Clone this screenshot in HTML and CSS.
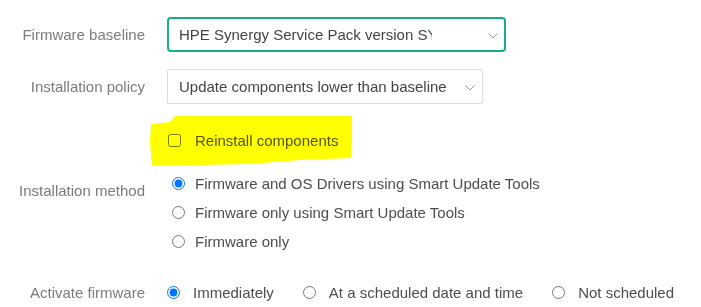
FILE: index.html
```html
<!DOCTYPE html>
<html lang="en">
<head>
    <meta charset="UTF-8">
    <meta name="viewport" content="width=device-width, initial-scale=1.0">
    <title>Firmware settings</title>
    <link rel="stylesheet" href="styles.css">
</head>
<body>
    <form class="settings">
        <div class="field">
            <span class="label">Firmware baseline</span>
            <div class="select select-active">
                <span class="select-text clipped">HPE Synergy Service Pack version SY</span>
                <svg class="chevron" width="10" height="6" viewBox="0 0 10 6"><path d="M0.5 0.5 L5 5 L9.5 0.5" fill="none" stroke="#9a9a9a" stroke-width="1"/></svg>
            </div>
        </div>

        <div class="field field-policy">
            <span class="label">Installation policy</span>
            <div class="select select-policy">
                <span class="select-text">Update components lower than baseline</span>
                <svg class="chevron" width="10" height="6" viewBox="0 0 10 6"><path d="M0.5 0.5 L5 5 L9.5 0.5" fill="none" stroke="#9a9a9a" stroke-width="1"/></svg>
            </div>
        </div>

        <div class="field field-check">
            <span></span>
            <label class="check">
                <input type="checkbox">
                <span>Reinstall components</span>
            </label>
            <!-- highlighter mark over the checkbox -->
            <svg class="highlight" width="210" height="56" viewBox="0 0 210 56">
                <polygon points="3,10 22,8 27,2 204,2 204,26 203,44 152,46 102,50 52,51 4,52 2,28" fill="#ffff00"/>
            </svg>
        </div>

        <div class="field field-method">
            <span class="label">Installation method</span>
            <div class="options">
                <label class="option"><input type="radio" name="method" checked><span>Firmware and OS Drivers using Smart Update Tools</span></label>
                <label class="option"><input type="radio" name="method"><span>Firmware only using Smart Update Tools</span></label>
                <label class="option"><input type="radio" name="method"><span>Firmware only</span></label>
            </div>
        </div>

        <div class="field field-activate">
            <span class="label">Activate firmware</span>
            <div class="inline-options">
                <label class="inline-option"><input type="radio" name="activate" checked><span>Immediately</span></label>
                <label class="inline-option"><input type="radio" name="activate"><span>At a scheduled date and time</span></label>
                <label class="inline-option"><input type="radio" name="activate"><span>Not scheduled</span></label>
            </div>
        </div>
    </form>
</body>
</html>
```

FILE: styles.css
```css
body {
    margin: 0;
    padding: 0;
    background: #fff;
    font-family: 'Liberation Sans', Arial, sans-serif;
    font-size: 15px;
    overflow: hidden;
    height: 307px;
}

.settings {
    display: flex;
    flex-direction: column;
    padding-top: 17px;
}

.field {
    display: grid;
    grid-template-columns: 145px 1fr;
    column-gap: 22px;
    align-items: center;
    position: relative;
}

.label {
    text-align: right;
    color: #7b7b7b;
    white-space: nowrap;
}

/* selects */
.select {
    display: flex;
    align-items: center;
    height: 35px;
    box-sizing: border-box;
    color: #444;
    background: #fff;
}

.select-active {
    width: 339px;
    border: 2px solid #17ad86;
    border-radius: 4px;
    padding: 0 6px 0 10px;
}

.select-policy {
    width: 316px;
    border: 1px solid #dcdcdc;
    border-radius: 2px;
    padding: 0 7px 0 11px;
}

.select-text {
    white-space: nowrap;
}

.clipped {
    width: 253px;
    overflow: hidden;
}

.chevron {
    margin-left: auto;
    margin-top: 3px;
}

.field-policy {
    margin-top: 17px;
}

/* checkbox */
.field-check {
    margin-top: 26px;
    height: 20px;
}

.check {
    display: flex;
    align-items: center;
    color: #555;
    position: relative;
}

.check input {
    width: 13px;
    height: 13px;
    margin: 0 14px 0 1px;
}

.highlight {
    position: absolute;
    left: 148px;
    top: -16px;
    mix-blend-mode: multiply;
    pointer-events: none;
}

/* installation method */
.field-method {
    margin-top: 19px;
    align-items: start;
}

.field-method .label {
    line-height: 29px;
    padding-top: 7px;
}

.options {
    display: flex;
    flex-direction: column;
}

.option {
    display: flex;
    align-items: center;
    height: 29px;
    color: #4d4d4d;
    white-space: nowrap;
}

.option input {
    width: 13px;
    height: 13px;
    margin: 0 10px 0 5px;
}

/* activate firmware */
.field-activate {
    margin-top: 22px;
    height: 29px;
}

.inline-options {
    display: flex;
    align-items: center;
    gap: 29px;
}

.inline-option {
    display: flex;
    align-items: center;
    color: #4d4d4d;
    white-space: nowrap;
}

.inline-option input {
    width: 13px;
    height: 13px;
    margin: 0 13px 0 0;
}
```
